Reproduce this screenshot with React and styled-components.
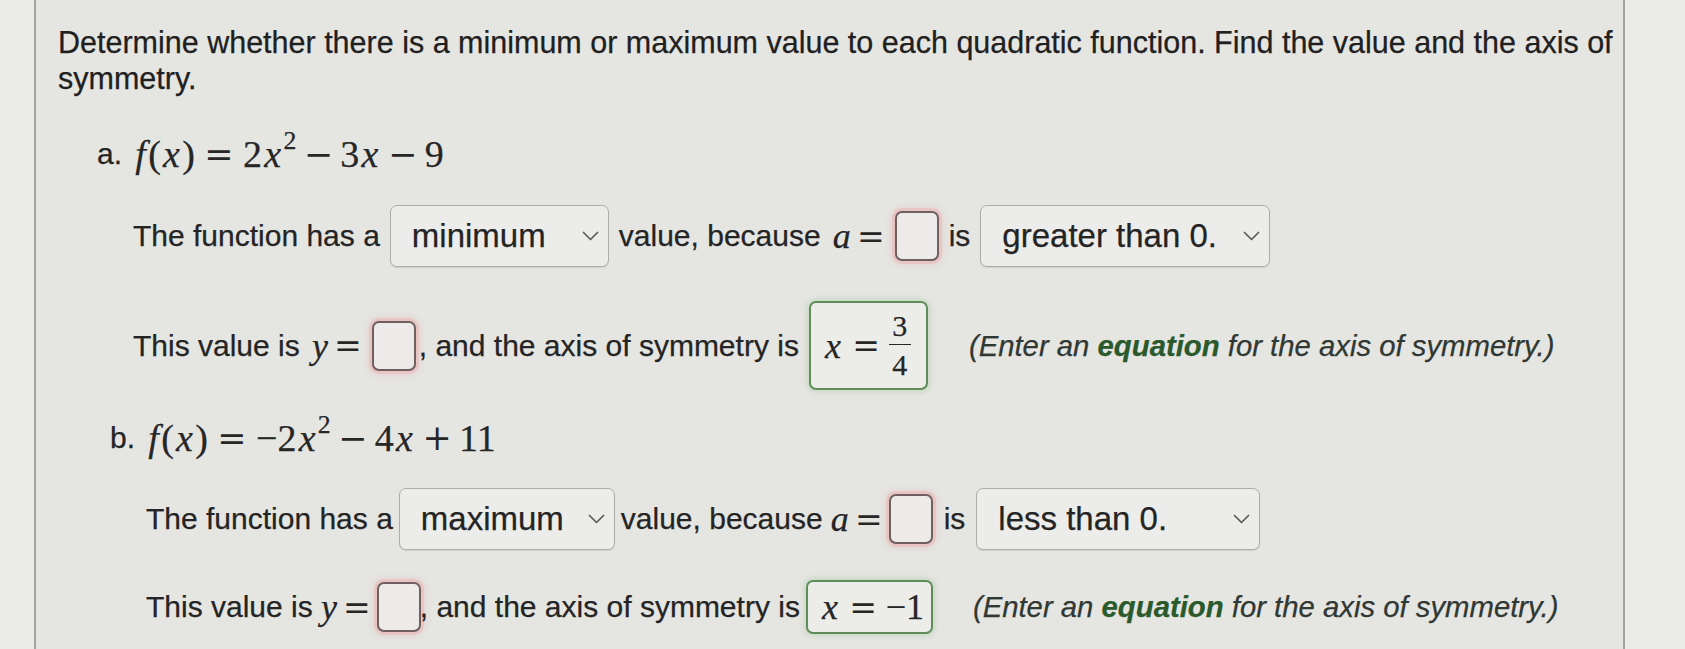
import React from "react";
import styled, { createGlobalStyle } from "styled-components";

const GlobalStyle = createGlobalStyle`
  html, body {
    margin: 0;
    padding: 0;
    background: #ebebe9;
  }
  body {
    font-family: "Liberation Sans", Arial, sans-serif;
    color: #242424;
    -webkit-text-stroke: 0.25px currentColor;
  }
`;

const Page = styled.div`
  height: 649px;
  overflow: hidden;
  background: #ebebe9;
`;

const Sheet = styled.main`
  margin-left: 34px;
  width: 1591px;
  box-sizing: border-box;
  height: 649px;
  padding: 24px 0 0 22px;
  background: #e5e5e2;
  border-left: 2px solid #a3a3a0;
  border-right: 2px solid #a3a3a0;
`;

const Prompt = styled.p`
  margin: 0;
  font-size: 30.5px;
  line-height: 36px;
  color: #202020;
  white-space: nowrap;
`;

const Part = styled.section`
  padding-left: ${({ shift }) => 39 + (shift || 0)}px;
`;

const PartHead = styled.div`
  display: flex;
  align-items: center;
  height: 44px;
  margin-top: ${({ top }) => top}px;
  font-size: 30px;
  gap: 11px;
`;

const Row = styled.div`
  display: flex;
  align-items: center;
  gap: ${({ gap }) => gap}px;
  height: ${({ h }) => h}px;
  margin-top: ${({ top }) => top}px;
  margin-left: 36px;
  font-size: 30px;
  white-space: nowrap;
`;

const Words = styled.span`
  margin: 0 ${({ space }) => space || 0}px;
  margin-left: ${({ tight }) => (tight ? "-7px" : undefined)};
`;

const Hint = styled.span`
  margin-left: ${({ offset }) => offset}px;
  font-size: 29.3px;
  font-style: italic;
  color: #303833;

  b {
    font-weight: 700;
    color: #2a5a2c;
  }
`;

const Math = styled.span`
  display: inline-flex;
  align-items: center;
  font-family: "Liberation Serif", "DejaVu Serif", serif;
  font-size: ${({ size }) => size || 36}px;
  color: #262626;
  white-space: nowrap;
`;

const Var = styled.i`
  font-style: italic;
  margin: 0 0.06em;
`;

const Op = styled.span`
  font-family: "DejaVu Serif", "Liberation Serif", serif;
  font-size: 0.92em;
  -webkit-text-stroke: 0;
  margin: 0 ${({ rel }) => (rel ? "0.27em" : "0.21em")};
  ${({ tail }) => tail && "margin: 0 0 0 0.12em;"}
`;

const Sup = styled.span`
  font-size: 0.68em;
  position: relative;
  top: -0.5em;
`;

const Frac = styled.span`
  display: inline-flex;
  flex-direction: column;
  align-items: center;
  font-size: 30px;
  line-height: 1;
`;

const FracBar = styled.span`
  width: 22px;
  border-top: 1.5px solid #2a2a2a;
  margin: 3px 0 5px;
`;

const Select = styled.div`
  display: flex;
  align-items: center;
  justify-content: space-between;
  box-sizing: border-box;
  width: ${({ w }) => w}px;
  height: 62px;
  padding: 0 9px 0 21px;
  background: #ececea;
  border: 1.5px solid #adadaa;
  border-radius: 7px;
  box-shadow: 0 1px 1px rgba(0, 0, 0, 0.1);
  font-size: 33px;
  color: #242424;
`;

const Chevron = styled.svg`
  width: 17px;
  height: 10px;
  flex: none;
`;

const AnswerBox = styled.span`
  display: inline-block;
  box-sizing: border-box;
  width: 44px;
  height: 50px;
  background: #ecebe9;
  border: 2px solid #6f5f5f;
  border-radius: 7px;
  box-shadow: 0 0 0 3px rgba(236, 170, 170, 0.35),
    0 0 6px 3px rgba(230, 150, 150, 0.3);
`;

const EquationBox = styled.span`
  display: inline-flex;
  align-items: center;
  box-sizing: border-box;
  width: ${({ w }) => w}px;
  height: ${({ h }) => h}px;
  padding-left: 12px;
  background: #ecece9;
  border: 2px solid #5f8d5a;
  border-radius: 7px;
  box-shadow: 0 0 5px 2px rgba(140, 195, 130, 0.35);
`;

const Caret = () => (
  <Chevron viewBox="0 0 17 10">
    <polyline
      points="1.5,1.5 8.5,8.5 15.5,1.5"
      fill="none"
      stroke="#5c5c5c"
      strokeWidth="1.7"
      strokeLinecap="round"
      strokeLinejoin="round"
    />
  </Chevron>
);

const Dropdown = ({ value, width }) => (
  <Select w={width}>
    <span>{value}</span>
    <Caret />
  </Select>
);

const parts = [
  {
    label: "a.",
    shift: 0,
    gap: 10,
    isSpace: 0,
    fn: (
      <Math size={38}>
        <Var>f</Var>(<Var>x</Var>)<Op rel>=</Op>2<Var>x</Var>
        <Sup>2</Sup>
        <Op>−</Op>3<Var>x</Var>
        <Op>−</Op>9
      </Math>
    ),
    kind: "minimum",
    kindWidth: 219,
    sign: "greater than 0.",
    signWidth: 290,
    axis: (
      <Math>
        <Var>x</Var>
        <Op rel>=</Op>
        <Frac>
          <span>3</span>
          <FracBar />
          <span>4</span>
        </Frac>
      </Math>
    ),
    axisW: 119,
    axisH: 89,
    hint: 31,
    gaps: [36, 29, 34],
  },
  {
    label: "b.",
    shift: 13,
    gap: 6,
    isSpace: 5,
    fn: (
      <Math size={38}>
        <Var>f</Var>(<Var>x</Var>)<Op rel>=</Op>−2<Var>x</Var>
        <Sup>2</Sup>
        <Op>−</Op>4<Var>x</Var>
        <Op>+</Op>11
      </Math>
    ),
    kind: "maximum",
    kindWidth: 216,
    sign: "less than 0.",
    signWidth: 284,
    axis: (
      <Math>
        <Var>x</Var>
        <Op rel>=</Op>−1
      </Math>
    ),
    axisW: 127,
    axisH: 54,
    hint: 34,
    gaps: [26, 28, 30],
  },
];

export default function App() {
  return (
    <>
      <GlobalStyle />
      <Page>
        <Sheet>
          <Prompt>
            Determine whether there is a minimum or maximum value to each
            quadratic function. Find the value and the axis of
            <br />
            symmetry.
          </Prompt>

          {parts.map((p) => (
            <Part key={p.label} shift={p.shift}>
              <PartHead top={p.gaps[0]}>
                <span>{p.label}</span>
                {p.fn}
              </PartHead>

              <Row h={62} gap={p.gap} top={p.gaps[1]}>
                <Words>The function has a</Words>
                <Dropdown value={p.kind} width={p.kindWidth} />
                <Words>value, because</Words>
                <Math>
                  <Var>a</Var>
                  <Op rel tail>
                    =
                  </Op>
                </Math>
                <AnswerBox />
                <Words space={p.isSpace}>is</Words>
                <Dropdown value={p.sign} width={p.signWidth} />
              </Row>

              <Row h={p.axisH} gap={p.gap} top={p.gaps[2]}>
                <Words>This value is</Words>
                <Math>
                  <Var>y</Var>
                  <Op rel tail>
                    =
                  </Op>
                </Math>
                <AnswerBox />
                <Words tight>, and the axis of symmetry is</Words>
                <EquationBox w={p.axisW} h={p.axisH}>
                  {p.axis}
                </EquationBox>
                <Hint offset={p.hint}>
                  (Enter an <b>equation</b> for the axis of symmetry.)
                </Hint>
              </Row>
            </Part>
          ))}
        </Sheet>
      </Page>
    </>
  );
}
